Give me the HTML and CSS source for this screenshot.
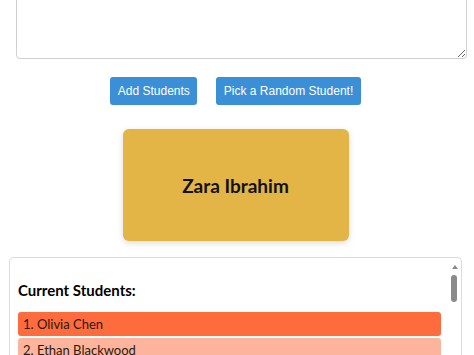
FILE: index.html
```html
<!DOCTYPE html>
<html>
<head>
<meta charset="utf-8">
<link rel="stylesheet" href="styles.css">
</head>
<body>
<div class="page">
  <textarea class="names"></textarea>
  <div class="actions">
    <button class="btn">Add Students</button>
    <button class="btn">Pick a Random Student!</button>
  </div>
  <div class="winner">Zara Ibrahim</div>
  <div class="list-box">
    <h3 class="list-title">Current Students:</h3>
    <ul class="students">
      <li class="student current">1. Olivia Chen</li>
      <li class="student next">2. Ethan Blackwood</li>
    </ul>
    <div class="scrollbar">
      <span class="arrow-up"></span>
      <span class="thumb"></span>
    </div>
  </div>
</div>
</body>
</html>
```
FILE: styles.css
```css
html, body {
  margin: 0;
  padding: 0;
  background: #fff;
  overflow: hidden;
}
.page {
  width: 471px;
  display: flex;
  flex-direction: column;
  font-family: Lato, "Noto Sans", sans-serif;
}
.names {
  display: block;
  box-sizing: border-box;
  width: 451px;
  height: 100px;
  margin: -41px 0 0 16px;
  border: 1px solid #cfcfcf;
  border-radius: 4px;
  background: #fff;
  resize: vertical;
}
.actions {
  display: flex;
  justify-content: center;
  gap: 19px;
  margin-top: 18px;
}
.btn {
  font-family: "Liberation Sans", Arial, sans-serif;
  font-size: 12px;
  color: #fff;
  background: #3a8fd7;
  border: none;
  border-radius: 3px;
  height: 28px;
  padding: 0 7.5px;
}
.winner {
  align-self: center;
  margin-top: 24px;
  width: 226px;
  height: 112px;
  box-sizing: border-box;
  display: flex;
  align-items: center;
  justify-content: center;
  background: #e3b446;
  border-radius: 6px;
  box-shadow: 0 2px 6px rgba(0,0,0,0.15);
  font-size: 19px;
  font-weight: 700;
  color: #111;
}
.list-box {
  position: relative;
  margin: 16px 0 0 9px;
  width: 453px;
  height: 110px;
  box-sizing: border-box;
  border: 1px solid #dcdcdc;
  border-bottom: none;
  border-radius: 5px 5px 0 0;
  padding: 20px 20px 0 8px;
  overflow: hidden;
}
.list-title {
  margin: 0 0 10px 0;
  font-size: 15px;
  font-weight: 700;
  color: #000;
  line-height: 24px;
}
.students {
  list-style: none;
  margin: 0;
  padding: 0;
}
.student {
  height: 24px;
  line-height: 24px;
  padding: 0 5px;
  margin-bottom: 2px;
  border-radius: 3px;
  font-size: 13px;
  color: #2a1a10;
}
.current { background: #fe6b3c; }
.next { background: #fcb59c; }
.scrollbar {
  position: absolute;
  top: 0;
  right: 0;
  width: 12px;
  height: 100%;
}
.arrow-up {
  position: absolute;
  top: 7px;
  left: 3px;
  width: 0;
  height: 0;
  border-left: 3px solid transparent;
  border-right: 3px solid transparent;
  border-bottom: 4px solid #8a8a8a;
}
.thumb {
  position: absolute;
  top: 17px;
  left: 2px;
  width: 6px;
  height: 27px;
  border-radius: 3px;
  background: #8a8a8a;
}
```
